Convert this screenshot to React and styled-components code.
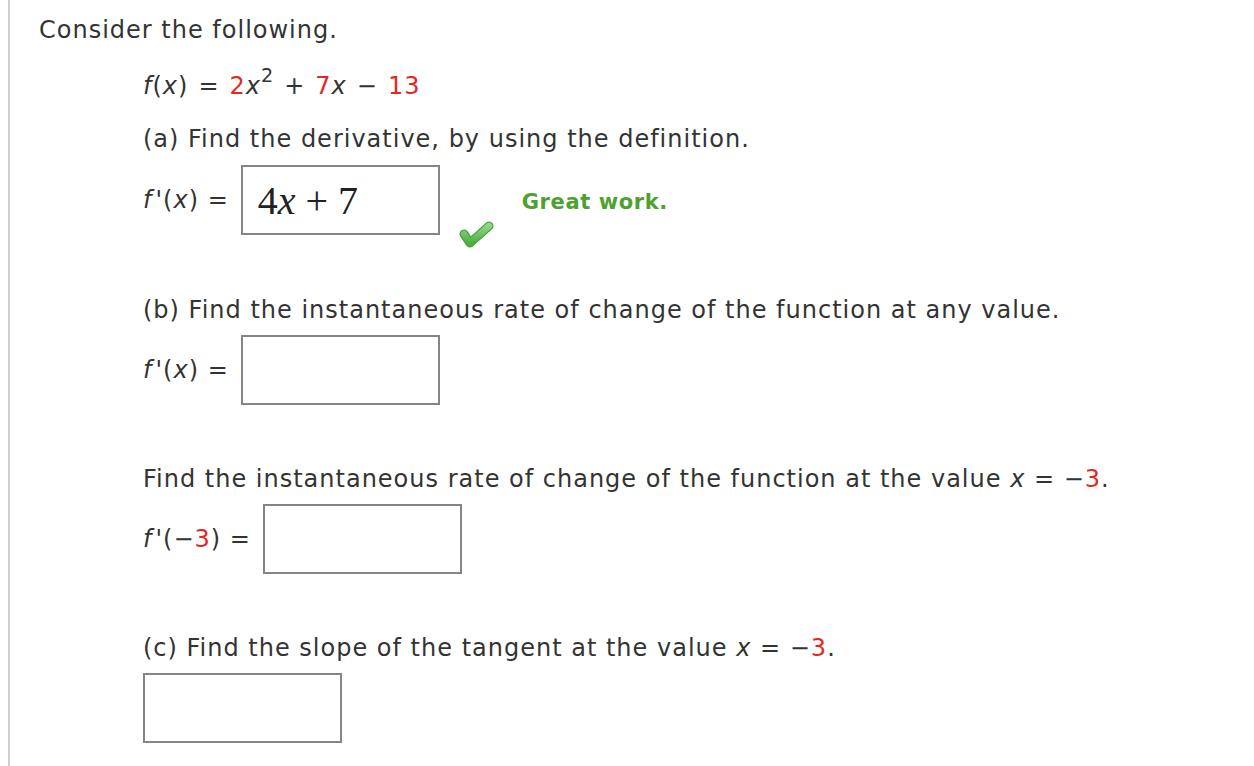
import React from 'react';
import styled, { createGlobalStyle } from 'styled-components';

const GlobalStyle = createGlobalStyle`
  html, body {
    margin: 0;
    padding: 0;
    background: #fff;
  }
  body {
    font-family: 'DejaVu Sans', Verdana, sans-serif;
    color: #333;
  }
`;

const Page = styled.div`
  margin-left: 8px;
  border-left: 2px solid #cfcfcf;
  padding: 15px 0 0 29px;
  height: 751px;
  box-sizing: content-box;
  overflow: hidden;
`;

const Line = styled.div`
  font-size: 24px;
  letter-spacing: 1px;
  line-height: 30px;
  height: 30px;
  white-space: nowrap;
  margin-top: ${p => p.top || 0}px;
  margin-left: ${p => (p.indent ? 104 : 0)}px;
`;

const Row = styled.div`
  display: flex;
  align-items: flex-start;
  margin-top: ${p => p.top || 0}px;
  margin-left: 104px;
`;

const Label = styled.div`
  font-size: 24px;
  letter-spacing: 1px;
  line-height: 70px;
  height: 70px;
  margin-right: 12px;
  white-space: nowrap;
`;

const AnswerBox = styled.div`
  width: 199px;
  height: 70px;
  border: 2px solid #858585;
  display: flex;
  align-items: center;
  padding-left: 15px;
  box-sizing: border-box;
  font-family: 'Liberation Serif', 'Times New Roman', serif;
  font-size: 40px;
  color: #222;
`;

const Red = styled.span`
  color: #e3281f;
`;

const I = styled.i`
  font-style: italic;
`;

const Sup = styled.span`
  font-size: 0.8em;
  position: relative;
  top: -0.6em;
`;

const Op = styled.span`
  margin: 0 ${p => p.gap || 6}px;
`;

const Prime = styled.span`
  margin-left: 3px;
`;

const Check = styled.svg`
  margin-top: 56px;
  margin-left: 19px;
  flex-shrink: 0;
`;

const Feedback = styled.div`
  margin-top: 25px;
  margin-left: 28px;
  font-size: 21px;
  letter-spacing: 0.6px;
  line-height: 24px;
  font-weight: bold;
  color: #4ca22f;
  white-space: nowrap;
`;

const Mi = styled.span`
  font-style: italic;
`;

export default function App() {
  return (
    <>
      <GlobalStyle />
      <Page>
        <Line>Consider the following.</Line>
        <Line indent top={26}>
          <I>f</I>(<I>x</I>)<Op gap={10}>=</Op><Red>2</Red><I>x</I><Sup>2</Sup>
          <Op gap={10}>+</Op><Red>7</Red><I>x</I><Op gap={10}>−</Op><Red>13</Red>
        </Line>
        <Line indent top={23}>(a) Find the derivative, by using the definition.</Line>
        <Row top={11}>
          <Label>
            <I>f</I><Prime>'</Prime>(<I>x</I>) =
          </Label>
          <AnswerBox>
            4<Mi>x</Mi>
            <Op gap={10}>+</Op>7
          </AnswerBox>
          <Check width="35" height="27" viewBox="0 0 35 27">
            <defs>
              <linearGradient id="chk" x1="0" y1="0" x2="0" y2="1">
                <stop offset="0" stopColor="#8fd67f" />
                <stop offset="1" stopColor="#4fae43" />
              </linearGradient>
            </defs>
            <polyline
              points="5,13 11,22 30,5"
              fill="none"
              stroke="#43a03a"
              strokeWidth="9"
              strokeLinecap="round"
              strokeLinejoin="round"
            />
            <polyline
              points="5,13 11,22 30,5"
              fill="none"
              stroke="url(#chk)"
              strokeWidth="6.5"
              strokeLinecap="round"
              strokeLinejoin="round"
            />
          </Check>
          <Feedback>Great work.</Feedback>
        </Row>
        <Line indent top={47}>(b) Find the instantaneous rate of change of the function at any value.</Line>
        <Row top={10}>
          <Label>
            <I>f</I><Prime>'</Prime>(<I>x</I>) =
          </Label>
          <AnswerBox />
        </Row>
        <Line indent top={59}>
          Find the instantaneous rate of change of the function at the value <I>x</I> = −<Red>3</Red>.
        </Line>
        <Row top={10}>
          <Label>
            <I>f</I><Prime>'</Prime>(−<Red>3</Red>) =
          </Label>
          <AnswerBox />
        </Row>
        <Line indent top={59}>
          (c) Find the slope of the tangent at the value <I>x</I> = −<Red>3</Red>.
        </Line>
        <Row top={10}>
          <AnswerBox />
        </Row>
      </Page>
    </>
  );
}
